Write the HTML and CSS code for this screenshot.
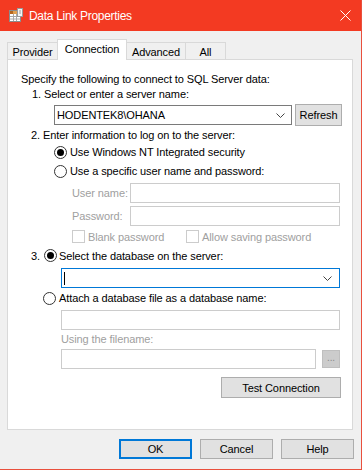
FILE: index.html
```html
<!DOCTYPE html>
<html lang="en">
<head>
    <meta charset="UTF-8">
    <title>Data Link Properties</title>
    <link rel="stylesheet" href="styles.css">
</head>
<body>

    <div class="window">
        <!-- Title bar -->
        <div class="titlebar">
            <svg class="app-icon" width="16" height="16" viewBox="0 0 16 16">
                <rect x="1.5" y="3.5" width="11" height="11" fill="#fff" stroke="#8c8c8c"/>
                <rect x="2" y="4" width="10" height="3" fill="#e0a050"/>
                <rect x="2" y="4" width="3" height="3" fill="#b5651d"/>
                <path d="M2 9.5h10M2 12h10M5.5 7v7M8.5 7v7" stroke="#a8a8a8"/>
                <rect x="9.5" y="1.5" width="5" height="8" fill="#f4f4f4" stroke="#9a9a9a"/>
                <path d="M11 4h2M11 6h2" stroke="#9a9a9a"/>
            </svg>
            <span class="title">Data Link Properties</span>
            <svg class="close" width="11" height="11" viewBox="0 0 11 11">
                <path d="M0.5 0.5l10 10M10.5 0.5l-10 10" stroke="#fff" stroke-width="1"/>
            </svg>
        </div>

        <!-- Tabs -->
        <div class="tabs">
            <div class="tab provider">Provider</div>
            <div class="tab active">Connection</div>
            <div class="tab advanced">Advanced</div>
            <div class="tab all">All</div>
        </div>

        <!-- Connection page -->
        <div class="panel">
            <p class="intro">Specify the following to connect to SQL Server data:</p>
            <p class="step one">1. Select or enter a server name:</p>
            <div class="server-row">
                <div class="combo server">
                    <span class="combo-text">HODENTEK8\OHANA</span>
                    <svg class="chevron" width="9" height="5" viewBox="0 0 9 5"><path d="M0.5 0.5l4 4 4-4" fill="none" stroke="#444"/></svg>
                </div>
                <button class="btn refresh">Refresh</button>
            </div>

            <p class="step two">2. Enter information to log on to the server:</p>
            <div class="radio-row auth first"><span class="radio checked"></span>Use Windows NT Integrated security</div>
            <div class="radio-row auth second"><span class="radio"></span>Use a specific user name and password:</div>
            <div class="field-row user"><span class="field-label">User name:</span><span class="input field"></span></div>
            <div class="field-row pass"><span class="field-label">Password:</span><span class="input field"></span></div>
            <div class="check-row">
                <span class="check-item blank"><span class="checkbox"></span>Blank password</span>
                <span class="check-item"><span class="checkbox"></span>Allow saving password</span>
            </div>

            <div class="db-row"><span class="step-num">3.</span><span class="radio checked"></span>Select the database on the server:</div>
            <div class="combo db">
                <span class="caret"></span>
                <svg class="chevron" width="9" height="5" viewBox="0 0 9 5"><path d="M0.5 0.5l4 4 4-4" fill="none" stroke="#444"/></svg>
            </div>
            <div class="radio-row attach"><span class="radio"></span>Attach a database file as a database name:</div>
            <div class="input wide"></div>
            <p class="sub-label">Using the filename:</p>
            <div class="file-row">
                <span class="input file"></span>
                <span class="browse">...</span>
            </div>
            <div class="test-row"><button class="btn test">Test Connection</button></div>
        </div>

        <!-- Dialog buttons -->
        <div class="footer">
            <button class="btn dialog default">OK</button>
            <button class="btn dialog">Cancel</button>
            <button class="btn dialog">Help</button>
        </div>
    </div>

</body>
</html>
```

FILE: styles.css
```css
body, html {
    margin: 0;
    padding: 0;
    font-family: "Liberation Sans", Arial, sans-serif;
    font-size: 11px;
    letter-spacing: -0.1px;
    color: #000;
    white-space: nowrap;
}

p {
    margin: 0;
}

.window {
    width: 361px;
    height: 469px;
    background-color: #f0f0f0;
    border-right: 1px solid #e9503d;
    border-bottom: 1px solid #e9503d;
}

/* Title bar */
.titlebar {
    height: 31px;
    background-color: #f33a22;
    display: flex;
    align-items: center;
    padding-left: 8px;
    color: #fff;
}

.app-icon {
    margin-top: -1px;
}

.title {
    margin-left: 5px;
    font-size: 12px;
    letter-spacing: -0.3px;
    flex: 1;
}

.close {
    margin-right: 10px;
}

/* Tabs */
.tabs {
    display: flex;
    align-items: flex-end;
    height: 28px;
    padding-left: 7px;
}

.tab {
    box-sizing: border-box;
    height: 17px;
    margin-right: -1px;
    border: 1px solid #d9d9d9;
    border-bottom: none;
    background-color: #f0f0f0;
    text-align: center;
    line-height: 17px;
    padding-top: 1px;
}

.tab.provider { width: 51px; }
.tab.advanced { width: 60px; }
.tab.all { width: 41px; }

.tab.active {
    position: relative;
    z-index: 1;
    width: 70px;
    height: 21px;
    margin-bottom: -1px;
    background-color: #fff;
    line-height: 18px;
    padding-top: 0;
}

/* Panel */
.panel {
    box-sizing: border-box;
    margin-left: 7px;
    width: 346px;
    height: 371px;
    border: 1px solid #d9d9d9;
    background-color: #fff;
}

.intro {
    margin: 12px 0 0 13px;
    line-height: 15px;
}

.step {
    line-height: 15px;
}

.step.one { margin-left: 24px; }
.step.two { margin: 2px 0 0 23px; }

.server-row {
    display: flex;
    align-items: center;
    height: 22px;
    margin-top: 2px;
    padding-left: 46px;
}

.combo {
    box-sizing: border-box;
    height: 20px;
    display: flex;
    align-items: center;
    background-color: #fff;
}

.combo.server {
    width: 238px;
    border: 1px solid #7a7a7a;
    padding: 0 6px 0 2px;
}

.combo-text {
    flex: 1;
}

.combo.db {
    width: 279px;
    margin: 5px 0 0 53px;
    border: 1px solid #0078d7;
    padding: 0 7px 0 2px;
}

.caret {
    width: 1px;
    height: 13px;
    background-color: #000;
    flex: none;
    margin-right: auto;
}

.btn {
    box-sizing: border-box;
    font-family: inherit;
    font-size: 11px;
    letter-spacing: -0.1px;
    color: #000;
    background-color: #e1e1e1;
    border: 1px solid #adadad;
    padding: 0;
    margin: 0;
}

.btn.refresh {
    width: 47px;
    height: 22px;
    margin-left: 3px;
}

/* Radio buttons */
.radio-row {
    display: flex;
    align-items: center;
    height: 15px;
    line-height: 15px;
}

.radio-row.auth { padding-left: 46px; }
.radio-row.first { margin-top: 2px; }
.radio-row.second { margin-top: 4px; }

.radio-row.attach {
    margin-top: 3px;
    padding-left: 35px;
}

.radio {
    box-sizing: border-box;
    width: 13px;
    height: 13px;
    border: 1px solid #333;
    border-radius: 50%;
    background-color: #fff;
    margin-right: 3px;
    display: flex;
    align-items: center;
    justify-content: center;
    flex: none;
}

.radio.checked::after {
    content: "";
    width: 7px;
    height: 7px;
    border-radius: 50%;
    background-color: #000;
}

/* Disabled credential fields */
.field-row {
    display: flex;
    align-items: center;
    height: 20px;
    padding-left: 64px;
    color: #a0a0a0;
}

.field-row.user { margin-top: 4px; }
.field-row.pass { margin-top: 3px; }

.field-label {
    width: 58px;
}

.input {
    box-sizing: border-box;
    display: block;
    height: 20px;
    border: 1px solid #cccccc;
    background-color: #fff;
}

.input.field { width: 210px; }

.check-row {
    display: flex;
    align-items: center;
    height: 15px;
    margin-top: 3px;
    padding-left: 64px;
    color: #a0a0a0;
}

.check-item {
    display: flex;
    align-items: center;
}

.check-item.blank { width: 114px; }

.checkbox {
    box-sizing: border-box;
    width: 13px;
    height: 13px;
    border: 1px solid #cccccc;
    margin-right: 3px;
}

/* Database */
.db-row {
    display: flex;
    align-items: center;
    height: 15px;
    margin-top: 4px;
    padding-left: 23px;
}

.step-num {
    width: 13px;
}

.db-row .radio {
    margin-right: 2px;
}

.input.wide {
    width: 279px;
    margin: 4px 0 0 53px;
}

.sub-label {
    margin: 2px 0 0 53px;
    line-height: 15px;
    color: #a0a0a0;
}

.file-row {
    display: flex;
    align-items: center;
    height: 20px;
    margin: 2px 0 0 53px;
}

.input.file { width: 255px; }

.browse {
    box-sizing: border-box;
    width: 18px;
    height: 18px;
    margin-left: 6px;
    background-color: #cccccc;
    border: 1px solid #bfbfbf;
    color: #8a8a8a;
    font-size: 10px;
    line-height: 14px;
    text-align: center;
}

.test-row {
    margin: 8px 0 0 213px;
}

.btn.test {
    width: 120px;
    height: 21px;
}

/* Footer */
.footer {
    display: flex;
    justify-content: flex-end;
    gap: 8px;
    padding: 9px 7px 0 0;
}

.btn.dialog {
    width: 73px;
    height: 20px;
}

.btn.default {
    border: 2px solid #0078d7;
}
```
